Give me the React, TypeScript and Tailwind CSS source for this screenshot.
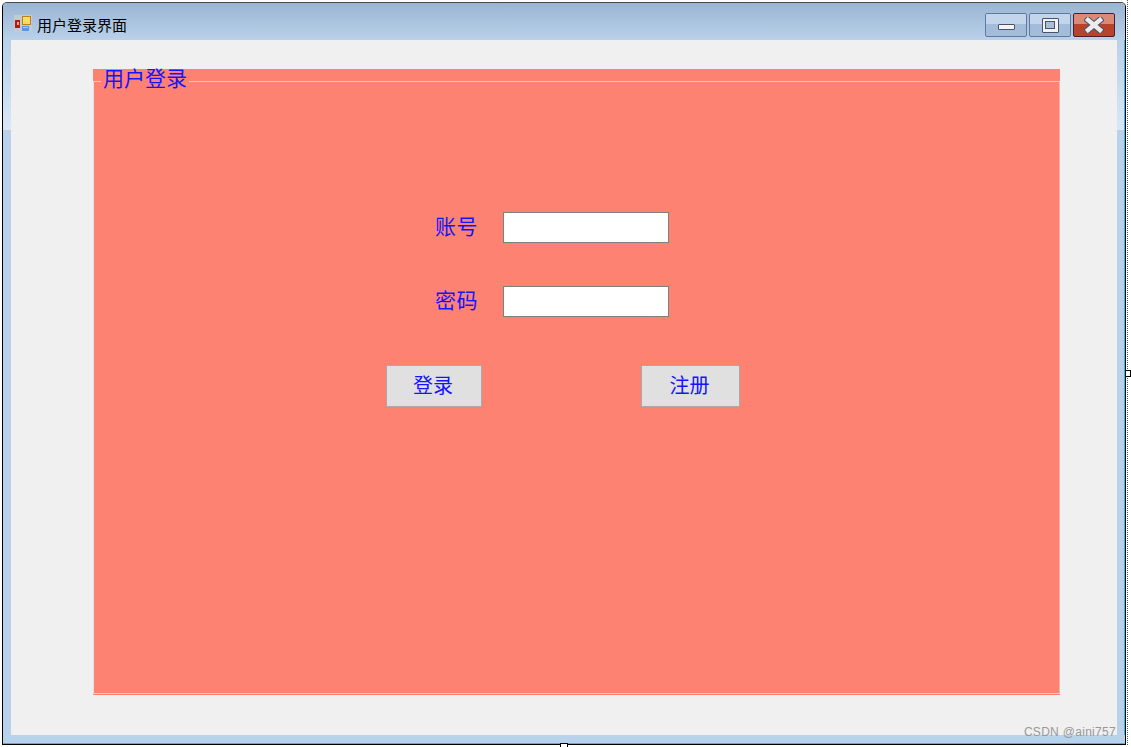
const uiFont = "font-['Noto_Sans_CJK_SC',sans-serif]";

function AppIcon() {
  return (
    <svg width="18" height="17" viewBox="0 0 18 17" className="ml-[11px] mt-[4px] shrink-0">
      <rect width="18" height="17" fill="#c6cad0" />
      <rect x="1" y="5" width="5" height="8" fill="#b01c0c" />
      <rect x="3" y="7" width="2" height="3" fill="#f0a090" />
      <rect x="8.5" y="1.5" width="8" height="8" fill="#fbdc6a" stroke="#b8860f" />
      <rect x="8" y="11" width="7" height="5" fill="#5f94ea" />
      <rect x="9" y="12" width="5" height="1" fill="#a9c8f5" />
    </svg>
  );
}

function CaptionButton({ kind }: { kind: 'min' | 'max' | 'close' }) {
  const isClose = kind === 'close';
  return (
    <div
      className={`relative flex h-[24px] w-[42px] items-center justify-center overflow-hidden rounded-[2px] border ${
        isClose ? 'border-[#4a2030] bg-[#b8432a]' : 'border-[#5f7a9c] bg-[#a2bcd9]'
      }`}
    >
      <div
        className={`absolute inset-x-0 top-0 h-[10px] ${isClose ? 'bg-[#dc8a78]' : 'bg-[#c2d5ea]'}`}
      />
      {kind === 'min' && (
        <div className="relative mt-[3px] h-[6px] w-[17px] rounded-[1px] border border-[#46546a] bg-[#f4f4f4]" />
      )}
      {kind === 'max' && (
        <div className="relative flex h-[15px] w-[17px] items-center justify-center rounded-[1px] border border-[#46546a] bg-[#f2f2f2]">
          <div className="h-[8px] w-[10px] border border-[#46546a] bg-[#a9bfd8]" />
        </div>
      )}
      {isClose && (
        <svg width="20" height="16" viewBox="0 0 20 16" className="relative">
          <path d="M4 3 L16 13 M16 3 L4 13" stroke="#4a5568" strokeWidth="6.5" strokeLinecap="square" />
          <path d="M4 3 L16 13 M16 3 L4 13" stroke="#ececec" strokeWidth="4.5" strokeLinecap="square" />
        </svg>
      )}
    </div>
  );
}

function SideFrame({ edge }: { edge: string }) {
  return (
    <div className={`flex w-[8px] shrink-0 flex-col bg-[#b9d1ea] ${edge}`}>
      <div className="h-[90px] bg-gradient-to-b from-[#b9d1ea] to-[#d8e7f6]" />
    </div>
  );
}

function Field({ label, top }: { label: string; top: string }) {
  return (
    <div className={`flex h-[31px] items-center pl-[341px] ${top}`}>
      <span className="w-[68px] pb-[4px] text-[21px] leading-none tracking-[0.5px] text-[#1414ff]">{label}</span>
      <input
        type="text"
        className="h-[31px] w-[166px] border border-[#7f7f7f] bg-white outline-none"
      />
    </div>
  );
}

function FormButton({ label, width }: { label: string; width: string }) {
  return (
    <button
      className={`flex h-[42px] items-center justify-center border border-[#a9a9a9] bg-[#e0e0e0] pb-[3px] pr-[2px] text-[20px] leading-none text-[#1414ff] ${width}`}
    >
      {label}
    </button>
  );
}

function LoginGroup() {
  return (
    <div className="relative mx-[82px] mt-[29px] h-[626px] w-[967px] bg-[#fe8272]">
      {/* Group title sits over the frame line */}
      <div className="absolute left-[8px] top-0 h-[16px] bg-[#fe8272] px-[2px] text-[21px] leading-[16px] text-[#1414ff]">
        用户登录
      </div>
      <div className="h-[12px]" />
      <div className="h-[1px] bg-[#ffc4bc]" />
      <div className="flex h-[611px] flex-col border-x border-l-[#f0e0dc] border-r-[#ffb0a6]">
        <Field label="账号" top="mt-[130px]" />
        <Field label="密码" top="mt-[43px]" />
        <div className="mt-[48px] flex pl-[292px]">
          <FormButton label="登录" width="w-[96px]" />
          <div className="w-[159px]" />
          <FormButton label="注册" width="w-[99px]" />
        </div>
      </div>
      <div className="h-[1px] bg-[#ffc4bc]" />
    </div>
  );
}

export default function App() {
  return (
    <div className={`relative h-[747px] w-[1131px] overflow-hidden bg-white ${uiFont}`}>
      <div className="ml-[2px] mt-[2px] flex h-[743px] w-[1124px] flex-col overflow-hidden rounded-t-[5px] border-x border-b border-t border-x-black border-b-black border-t-[#4a4a4a]">
        {/* Title bar */}
        <div className="flex h-[37px] shrink-0 items-center bg-gradient-to-b from-[#9ab5d3] to-[#b9d1ea]">
          <AppIcon />
          <span className="ml-[5px] mt-[5px] text-[15px] leading-none text-black">用户登录界面</span>
          <div className="ml-auto mr-[10px] flex gap-[2px] self-start pt-[10px]">
            <CaptionButton kind="min" />
            <CaptionButton kind="max" />
            <CaptionButton kind="close" />
          </div>
        </div>

        <div className="flex min-h-0 flex-1">
          <SideFrame edge="" />
          <div className="w-[1106px] shrink-0 bg-[#f0f0f0]">
            <LoginGroup />
          </div>
          <SideFrame edge="border-r border-r-[#35b8e6]" />
        </div>
        <div className="h-[9px] shrink-0 border-b border-b-[#35b8e6] bg-[#b9d1ea]" />
      </div>

      {/* Watermark */}
      <span className="absolute right-[15px] top-[725px] font-['Liberation_Sans',sans-serif] text-[12px] leading-[14px] tracking-[0.3px] text-[#989898]">
        CSDN @aini757
      </span>

      {/* Designer selection handles */}
      <div className="absolute left-[1127px] top-0 h-[745px] border-l border-dotted border-[#555]" />
      <div className="absolute left-[1125px] top-[370px] h-[7px] w-[6px] border border-black bg-white" />
      <div className="absolute left-[560px] top-[743px] h-[6px] w-[8px] border border-black bg-white" />
    </div>
  );
}
